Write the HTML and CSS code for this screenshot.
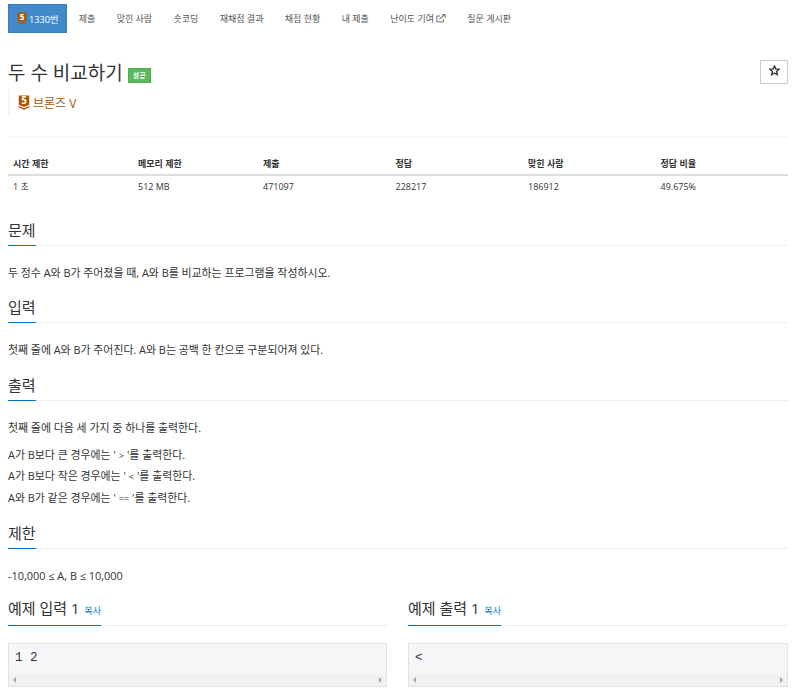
FILE: index.html
```html
<!DOCTYPE html>
<html lang="ko">
<head>
    <meta charset="UTF-8">
    <title>두 수 비교하기</title>
    <link rel="stylesheet" href="styles.css">
</head>
<body>
    <ul class="tabs">
        <li class="tab active">
            <svg class="tier-icon small" viewBox="0 0 16 19"><path class="shield" d="M1 0H15V12.5L8 15.5L1 12.5Z"/><path class="shield" d="M1 14L8 17L15 14V16L8 19L1 16Z"/><text x="8" y="11.5" class="tier-num">5</text></svg>
            1330번
        </li>
        <li class="tab">제출</li>
        <li class="tab">맞힌 사람</li>
        <li class="tab">숏코딩</li>
        <li class="tab">재채점 결과</li>
        <li class="tab">채점 현황</li>
        <li class="tab">내 제출</li>
        <li class="tab">난이도 기여
            <svg class="ext-icon" viewBox="0 0 12 10"><path d="M9 6V9H1V2H5" fill="none" stroke="#555" stroke-width="1"/><path d="M4 6L10 1M7 0.5H11V4" fill="none" stroke="#555" stroke-width="1.2"/></svg>
        </li>
        <li class="tab">질문 게시판</li>
    </ul>

    <div class="title-row">
        <h1 class="title">두 수 비교하기</h1>
        <span class="label-ok">성공</span>
        <button class="star-btn">
            <svg class="star-icon" viewBox="0 0 12 12"><path d="M6 1L7.4 4.3L11 4.6L8.3 7L9.1 10.6L6 8.7L2.9 10.6L3.7 7L1 4.6L4.6 4.3Z" fill="none" stroke="#333" stroke-width="1.5"/></svg>
        </button>
    </div>

    <div class="tier-quote">
        <svg class="tier-icon" viewBox="0 0 16 19"><path class="shield" d="M1 0H15V12.5L8 15.5L1 12.5Z"/><path class="shield" d="M1 14L8 17L15 14V16L8 19L1 16Z"/><text x="8" y="11.5" class="tier-num">5</text></svg>
        <span>브론즈 V</span>
    </div>

    <div class="rule"></div>

    <table class="info">
        <thead>
            <tr>
                <th>시간 제한</th>
                <th>메모리 제한</th>
                <th>제출</th>
                <th>정답</th>
                <th>맞힌 사람</th>
                <th>정답 비율</th>
            </tr>
        </thead>
        <tbody>
            <tr>
                <td>1 초</td>
                <td>512 MB</td>
                <td>471097</td>
                <td>228217</td>
                <td>186912</td>
                <td>49.675%</td>
            </tr>
        </tbody>
    </table>

    <section class="section first">
        <div class="headline"><h2>문제</h2></div>
        <p>두 정수 A와 B가 주어졌을 때, A와 B를 비교하는 프로그램을 작성하시오.</p>
    </section>

    <section class="section">
        <div class="headline"><h2>입력</h2></div>
        <p>첫째 줄에 A와 B가 주어진다. A와 B는 공백 한 칸으로 구분되어져 있다.</p>
    </section>

    <section class="section">
        <div class="headline"><h2>출력</h2></div>
        <p>첫째 줄에 다음 세 가지 중 하나를 출력한다.</p>
        <ul class="plain-list">
            <li>A가 B보다 큰 경우에는 '<code>&gt;</code>'를 출력한다.</li>
            <li>A가 B보다 작은 경우에는 '<code>&lt;</code>'를 출력한다.</li>
            <li>A와 B가 같은 경우에는 '<code>==</code>'를 출력한다.</li>
        </ul>
    </section>

    <section class="section">
        <div class="headline"><h2>제한</h2></div>
        <p>-10,000 ≤ A, B ≤ 10,000</p>
    </section>

    <div class="samples">
        <div class="sample">
            <div class="headline"><h2>예제 입력 1 <a class="copy">복사</a></h2></div>
            <div class="sample-box">
                <pre>1 2</pre>
                <div class="scrollbar"><span class="arrow-left"></span><span class="arrow-right"></span></div>
            </div>
        </div>
        <div class="sample">
            <div class="headline"><h2>예제 출력 1 <a class="copy">복사</a></h2></div>
            <div class="sample-box">
                <pre>&lt;</pre>
                <div class="scrollbar"><span class="arrow-left"></span><span class="arrow-right"></span></div>
            </div>
        </div>
    </div>
</body>
</html>
```

FILE: styles.css
```css
html {
    overflow: hidden;
}

body {
    margin: 0;
    padding: 4px 12px 0 8px;
    height: 689px;
    overflow: hidden;
    font-family: "Open Sans", "Noto Sans CJK KR", sans-serif;
    font-size: 10.9px;
    color: #333;
    background: #fff;
}

.tabs {
    display: flex;
    list-style: none;
    margin: 0;
    padding: 0;
    height: 29px;
}

.tab {
    display: flex;
    align-items: center;
    gap: 2px;
    padding: 0 10.7px;
    font-size: 9px;
    color: #555;
}

.tab.active {
    margin-right: 1px;
    padding: 0 8px;
    width: 59px;
    box-sizing: border-box;
    font-size: 9.2px;
    color: #fff;
    background: #428bca;
    border: 1px solid #357ebd;
    white-space: nowrap;
}

.tier-icon {
    width: 12px;
    height: 15px;
    flex: none;
}

.tier-icon.small {
    width: 10px;
    height: 13px;
}

.shield {
    fill: #ad5600;
}

.tier-num {
    fill: #fff;
    font-family: "Open Sans", sans-serif;
    font-size: 13px;
    font-weight: 700;
    text-anchor: middle;
}

.ext-icon {
    width: 10px;
    height: 9px;
}

.title-row {
    display: flex;
    align-items: center;
    margin-top: 27px;
    height: 26px;
}

.title {
    margin: 0;
    font-size: 19px;
    font-weight: 400;
    line-height: 26px;
}

.label-ok {
    margin: 4px 0 0 5px;
    padding: 1px 4px;
    font-size: 7px;
    font-weight: 700;
    line-height: 11px;
    color: #fff;
    background: #5cb85c;
    border: 1px solid #4cae4c;
}

.star-btn {
    display: flex;
    align-items: flex-start;
    justify-content: center;
    margin-left: auto;
    margin-top: -2px;
    padding: 4px 0 0;
    width: 28px;
    height: 24px;
    background: #fff;
    border: 1px solid #ccc;
}

.star-icon {
    width: 11px;
    height: 11px;
}

.tier-quote {
    display: flex;
    align-items: center;
    gap: 3px;
    margin-top: 3px;
    padding-left: 8px;
    height: 27px;
    font-size: 12px;
    color: #ad5600;
    border-left: 2px solid #f5f5f5;
}

.rule {
    margin-top: 20px;
    height: 2px;
    background: #f8f8f8;
}

.info {
    width: 100%;
    margin-top: 14px;
    table-layout: fixed;
    border-collapse: collapse;
    font-size: 9px;
}

.info th,
.info td {
    padding: 0 5px;
    text-align: left;
}

.info th {
    height: 22px;
    font-weight: 600;
    border-bottom: 2px solid #ddd;
}

.info th:nth-child(1),
.info th:nth-child(2) {
    width: 115px;
}

.info th:nth-child(3),
.info th:nth-child(4),
.info th:nth-child(5) {
    width: 122.5px;
}

.info td {
    height: 21px;
    color: #333;
}

.section {
    margin-top: 15.5px;
}

.section.first {
    margin-top: 21.7px;
}

.headline {
    border-bottom: 1px solid #eee;
}

.headline h2 {
    display: inline-block;
    margin: 0 0 -1px;
    padding-bottom: 3px;
    font-size: 15px;
    font-weight: 400;
    line-height: 23px;
    border-bottom: 1px solid #0076c0;
}

.section p {
    margin: 19px 0 0;
    line-height: 16px;
}

.plain-list {
    list-style: none;
    margin: 8px 0 -2px;
    padding: 0;
    line-height: 21.5px;
}

.plain-list code {
    padding: 0 3px;
    font-family: "Open Sans", sans-serif;
    font-size: 9px;
    line-height: 1;
}

.samples {
    display: grid;
    grid-template-columns: 379px 380px;
    gap: 21px;
    margin-top: 13.3px;
}

.copy {
    margin-left: 1px;
    font-size: 9px;
    color: #0076c0;
}

.sample-box {
    margin-top: 17px;
    border: 1px solid #e1e1e8;
    background: #f7f7f9;
}

.sample-box pre {
    margin: 0;
    padding: 7px 6px 0;
    height: 23px;
    font-family: "Liberation Mono", monospace;
    font-size: 12.5px;
    line-height: 14px;
    color: #333;
}

.scrollbar {
    display: flex;
    align-items: center;
    justify-content: space-between;
    padding: 0 4px;
    height: 12px;
    background: #f1f1f1;
}

.arrow-left {
    border: 3px solid transparent;
    border-right-color: #a3a3a3;
    border-left-width: 0;
}

.arrow-right {
    border: 3px solid transparent;
    border-left-color: #a3a3a3;
    border-right-width: 0;
}
```
